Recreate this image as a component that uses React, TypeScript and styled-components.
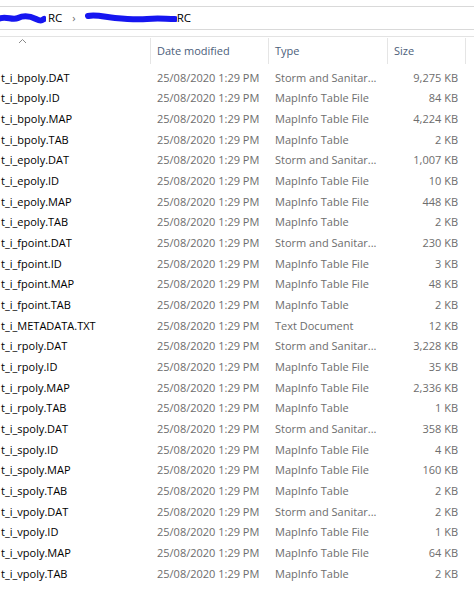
import React from "react";
import styled, { createGlobalStyle } from "styled-components";

const Global = createGlobalStyle`
  html, body { margin: 0; padding: 0; background: #fff; }
  body { font-family: "Open Sans", "Noto Sans", "Liberation Sans", sans-serif; overflow: hidden; }
`;

const Page = styled.div`
  width: 474px;
  height: 595px;
  overflow: hidden;
  background: #fff;
  padding-top: 6px;
  box-sizing: border-box;
`;

const AddressBar = styled.div`
  height: 21px;
  border-top: 1px solid #d9d9d9;
  border-bottom: 1px solid #d9d9d9;
  display: flex;
  align-items: center;
  padding-bottom: 1px;
  box-sizing: content-box;
  font-size: 11.5px;
  color: #000;
  white-space: nowrap;
`;

const Crumb = styled.span`
  display: inline-flex;
  align-items: center;
`;

const Scribble = styled.svg<{ $w: number }>`
  width: ${(p) => p.$w}px;
  height: 14px;
  flex: none;
`;

const Chevron = styled.span`
  margin: 0 9px 0 10px;
  color: #6b6b6b;
  font-size: 11px;
  line-height: 1;
`;

const HeaderRow = styled.div`
  margin-top: 6px;
  height: 27px;
  border-top: 1px solid #e3e3e3;
  display: grid;
  grid-template-columns: 150px 118px 119px 78px 9px;
  position: relative;
`;

const HeadCell = styled.div<{ $first?: boolean }>`
  border-left: ${(p) => (p.$first ? "none" : "1px solid #e5e5e5")};
  margin-top: 1px;
  display: flex;
  align-items: center;
  padding-left: 6px;
  padding-bottom: 1px;
  font-size: 11px;
  color: #4c607a;
  white-space: nowrap;
`;

const SortArrow = styled.svg`
  position: absolute;
  left: 18px;
  top: 1px;
  width: 9px;
  height: 6px;
`;

const Body = styled.div`
  padding-top: 3px;
`;

const Row = styled.div`
  height: 20.67px;
  display: grid;
  grid-template-columns: 150px 118px 119px 78px;
  align-items: center;
  font-size: 11px;
  white-space: nowrap;
`;

const NameCell = styled.div`
  color: #000;
  padding-left: 1px;
`;

const InfoCell = styled.div<{ $right?: boolean }>`
  color: #6d6d6d;
  padding-left: ${(p) => (p.$right ? "0" : "7px")};
  padding-right: ${(p) => (p.$right ? "7px" : "0")};
  text-align: ${(p) => (p.$right ? "right" : "left")};
`;

type F = [string, string, string];
const files: F[] = [
  ["t_i_bpoly.DAT", "Storm and Sanitar...", "9,275 KB"],
  ["t_i_bpoly.ID", "MapInfo Table File", "84 KB"],
  ["t_i_bpoly.MAP", "MapInfo Table File", "4,224 KB"],
  ["t_i_bpoly.TAB", "MapInfo Table", "2 KB"],
  ["t_i_epoly.DAT", "Storm and Sanitar...", "1,007 KB"],
  ["t_i_epoly.ID", "MapInfo Table File", "10 KB"],
  ["t_i_epoly.MAP", "MapInfo Table File", "448 KB"],
  ["t_i_epoly.TAB", "MapInfo Table", "2 KB"],
  ["t_i_fpoint.DAT", "Storm and Sanitar...", "230 KB"],
  ["t_i_fpoint.ID", "MapInfo Table File", "3 KB"],
  ["t_i_fpoint.MAP", "MapInfo Table File", "48 KB"],
  ["t_i_fpoint.TAB", "MapInfo Table", "2 KB"],
  ["t_i_METADATA.TXT", "Text Document", "12 KB"],
  ["t_i_rpoly.DAT", "Storm and Sanitar...", "3,228 KB"],
  ["t_i_rpoly.ID", "MapInfo Table File", "35 KB"],
  ["t_i_rpoly.MAP", "MapInfo Table File", "2,336 KB"],
  ["t_i_rpoly.TAB", "MapInfo Table", "1 KB"],
  ["t_i_spoly.DAT", "Storm and Sanitar...", "358 KB"],
  ["t_i_spoly.ID", "MapInfo Table File", "4 KB"],
  ["t_i_spoly.MAP", "MapInfo Table File", "160 KB"],
  ["t_i_spoly.TAB", "MapInfo Table", "2 KB"],
  ["t_i_vpoly.DAT", "Storm and Sanitar...", "2 KB"],
  ["t_i_vpoly.ID", "MapInfo Table File", "1 KB"],
  ["t_i_vpoly.MAP", "MapInfo Table File", "64 KB"],
  ["t_i_vpoly.TAB", "MapInfo Table", "2 KB"],
];

export default function App() {
  return (
    <Page>
      <Global />
      <AddressBar>
        <Crumb>
          <Scribble $w={46} viewBox="0 0 46 14">
            <path
              d="M-2 8 C6 4 12 10 18 7 S30 5 36 8 S42 9 44 8"
              stroke="#1616f0"
              strokeWidth="6"
              fill="none"
              strokeLinecap="round"
            />
          </Scribble>
          <span style={{ marginLeft: 2 }}>RC</span>
        </Crumb>
        <Chevron>›</Chevron>
        <Crumb>
          <Scribble $w={92} viewBox="0 0 92 14">
            <path
              d="M3 5 C10 3 20 6 30 7 S50 9 62 8 S80 8 90 8"
              stroke="#1616f0"
              strokeWidth="6"
              fill="none"
              strokeLinecap="round"
            />
          </Scribble>
          <span>RC</span>
        </Crumb>
      </AddressBar>
      <HeaderRow>
        <SortArrow viewBox="0 0 9 6">
          <path d="M1 5 L4.5 1.5 L8 5" stroke="#8a8a8a" strokeWidth="1" fill="none" />
        </SortArrow>
        <HeadCell $first />
        <HeadCell>Date modified</HeadCell>
        <HeadCell>Type</HeadCell>
        <HeadCell>Size</HeadCell>
        <HeadCell />
      </HeaderRow>
      <Body>
        {files.map(([n, t, s]) => (
          <Row key={n}>
            <NameCell>{n}</NameCell>
            <InfoCell>25/08/2020 1:29 PM</InfoCell>
            <InfoCell>{t}</InfoCell>
            <InfoCell $right>{s}</InfoCell>
          </Row>
        ))}
      </Body>
    </Page>
  );
}
